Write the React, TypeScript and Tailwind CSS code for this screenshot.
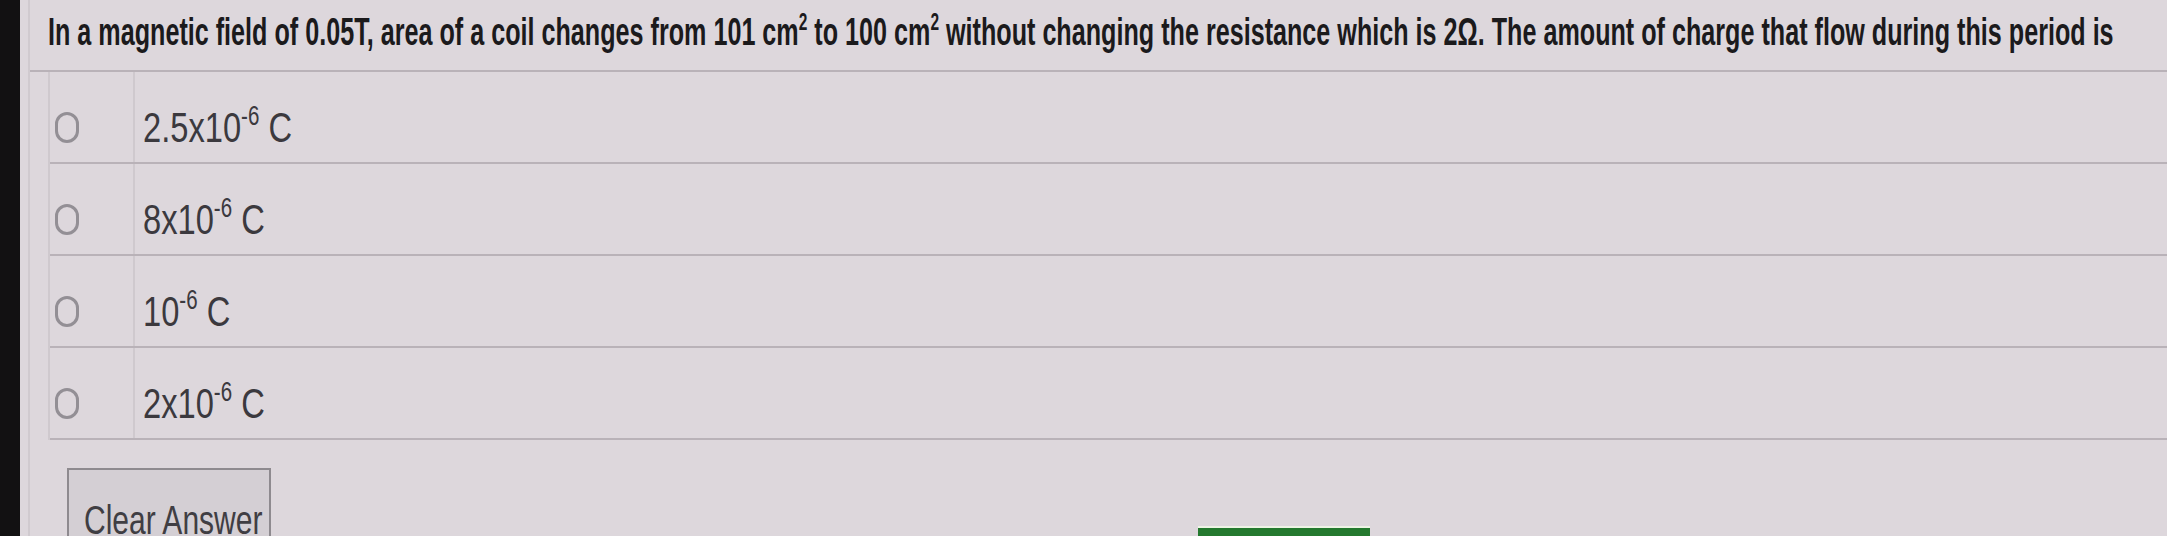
import React from "react";

const options = [
    { lead: "2.5x10", exp: "-6", unit: "C" },
    { lead: "8x10", exp: "-6", unit: "C" },
    { lead: "10", exp: "-6", unit: "C" },
    { lead: "2x10", exp: "-6", unit: "C" },
];

function Radio() {
    return <span className="block w-[24px] h-[31px] rounded-full border-[3px] border-[#938f95] shrink-0" />;
}

function OptionRow({ lead, exp, unit }: { lead: string; exp: string; unit: string }) {
    return (
        <div className="flex h-[92px] border-b-2 border-[#b9b2b8]">
            <div className="w-[83px] flex items-center pl-[5px] pt-[20px]">
                <Radio />
            </div>
            <div className="flex-1 flex items-center pl-[8px] pt-[20px] border-l-2 border-[#cfc9ce]">
                <span className="inline-block whitespace-nowrap origin-left scale-x-[0.76] text-[43px] leading-none text-[#3b393e] font-['Liberation_Sans',Arial,sans-serif]">
                    {lead}
                    <sup className="text-[27px] relative -top-[17px] align-baseline">{exp}</sup> {unit}
                </span>
            </div>
        </div>
    );
}

export default function App() {
    return (
        <div className="w-[2167px] h-[536px] overflow-hidden flex bg-[#ddd7dc] font-['Liberation_Sans',Arial,sans-serif]">
            {/* monitor bezel edge */}
            <div className="w-[20px] bg-[#121112] shrink-0" />

            <div className="flex-1 flex flex-col pl-[8px]">
                <div className="flex-1 flex flex-col border-l-2 border-[#d0cacf]">
                    {/* question */}
                    <div className="h-[72px] flex items-center pb-[8px] pl-[18px] border-b-2 border-[#b9b2b8] overflow-hidden">
                        <p className="inline-block whitespace-nowrap origin-left scale-x-[0.645] text-[39px] leading-none font-bold text-[#1b1a1c]">
                            In a magnetic field of 0.05T, area of a coil changes from 101 cm
                            <sup className="text-[24px] relative -top-[15px] align-baseline">2</sup> to 100 cm
                            <sup className="text-[24px] relative -top-[15px] align-baseline">2</sup> without changing the resistance which is 2Ω. The
                            amount of charge that flow during this period is
                        </p>
                    </div>

                    {/* options table */}
                    <div className="ml-[18px] border-l-2 border-[#cfc9ce]">
                        {options.map((o) => (
                            <OptionRow key={o.lead} {...o} />
                        ))}
                    </div>

                    {/* actions */}
                    <div className="flex items-start mt-[28px] pl-[37px]">
                        <button className="w-[204px] h-[90px] shrink-0 text-left bg-[#d4cfd4] border-2 border-[#8e8a8f] pl-[15px] pt-[14px]">
                            <span className="inline-block whitespace-nowrap origin-left scale-x-[0.75] text-[40px] leading-none text-[#403e43]">
                                Clear Answer
                            </span>
                        </button>
                        <div className="ml-[927px] mt-[58px] w-[172px] h-[40px] bg-[#24792f] border-t-2 border-[#eef4e6]" />
                    </div>
                </div>
            </div>
        </div>
    );
}
